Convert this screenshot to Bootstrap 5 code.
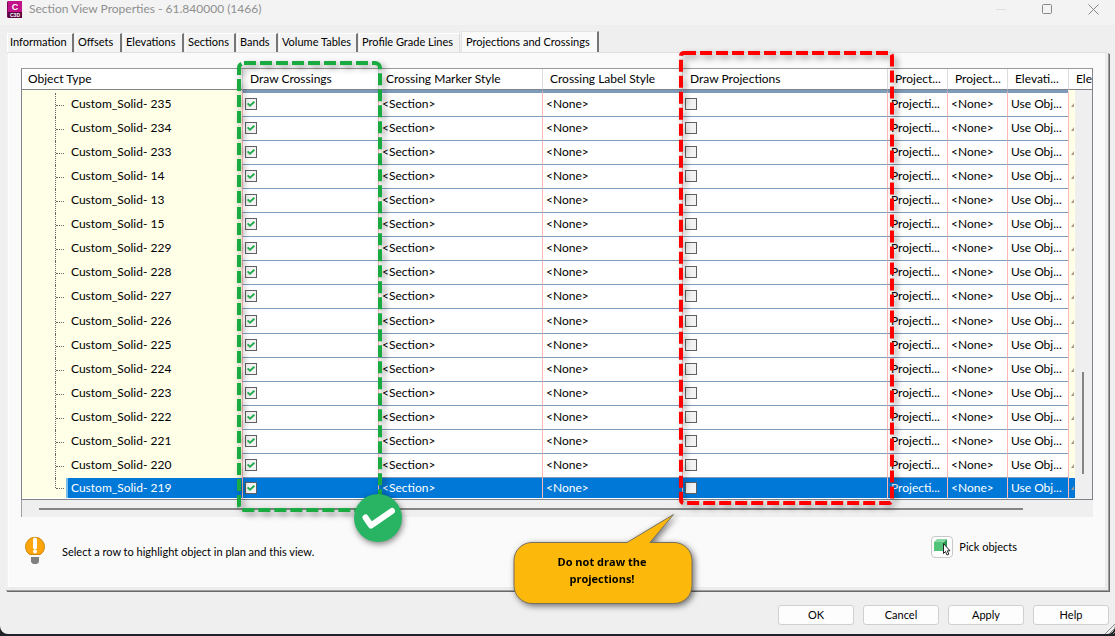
<!DOCTYPE html>
<html lang="en">
<head>
<meta charset="utf-8">
<meta name="viewport" content="width=device-width, initial-scale=1">
<title>Section View Properties</title>
<link rel="stylesheet" href="https://cdn.jsdelivr.net/npm/bootstrap@5.3.0/dist/css/bootstrap.min.css">
<style>
body { background: #1f2328; font-family: Lato, "Open Sans", sans-serif; font-size: 12px; line-height: 16px; color: #000; }
.dialog { min-height: calc(100vh - 2px); background: #efefef; border-radius: 0 0 8px 8px; position: relative; }
.titlebar { height: 25px; background: #f3f3f3; color: #8f8f8f; padding: 0 7px 7px; gap: 6px; }
.caption-btn { border: 0; background: none; padding: 0; width: 46px; height: 18px; display: flex; align-items: center; justify-content: center; }
.caption-group { margin-right: -8px; }

/* tab strip */
.tabstrip { padding: 7px 6px 0; height: 27px; }
.tabstrip .nav-link { font-size: 11px; line-height: 14px; color: #000; border: 0; border-top: 1px solid #fff; border-left: 1px solid #fff; border-right: 2px solid #767676; border-radius: 0; height: 19px; padding: 1px 0 0 2px; margin: 0 0 0 1px; background: #f3f3f3; white-space: nowrap; }
.tabstrip .nav-link.active { height: 21px; background: #fafafa; padding: 3px 0 0 4px; border-color: #e4e4e4 #767676 transparent #e4e4e4; border-bottom: 0; }
.nav-link:nth-child(1) { width: 67px; }
.nav-link:nth-child(2) { width: 47px; }
.nav-link:nth-child(3) { width: 61px; }
.nav-link:nth-child(4) { width: 51px; }
.nav-link:nth-child(5) { width: 41px; }
.nav-link:nth-child(6) { width: 79px; }
.nav-link:nth-child(7) { width: 101px; }
.nav-link:nth-child(8) { width: 138px; }
.tabstrip .nav-link:nth-child(7) { border-right: 1px solid #dcdcdc; }

.pane { margin: 0 7px 0 5px; background: #fafafa; border: 3px solid #ececec; border-top: 1px solid #e0e0e0; border-left-color: #f1f1f1; box-shadow: 1px 1px 0 #a0a0a0, 2px 2px 0 #686868, inset 1px 0 0 #fff; padding: 15px 12px 20px 13px; min-height: 537px; }

/* object grid */
.grid-frame { border: 1px solid #82828a; border-top-color: #9a9a9a; background: #fff; }
.objgrid { width: 100%; table-layout: fixed; border-collapse: separate; border-spacing: 0; }
.c-tree { width: 220px; }
.c-draw { width: 136px; }
.c-marker { width: 164px; }
.c-label { width: 140px; }
.c-short { width: 60px; }
.c-elev { width: 61px; }
.c-edge { width: 7px; }
.c-rail { width: 17px; }
.objgrid th { height: 21px; padding: 0 0 0 6px; font-weight: 400; text-align: left; white-space: nowrap; border-bottom: 1px solid #82828a; position: relative; }
.objgrid th + th { border-left: 1px solid #dcdcdc; padding-left: 7px; }
.objgrid td { height: 24px; padding: 0 0 1px 3px; vertical-align: middle; border-bottom: 1px solid #7d9cbb; border-left: 1px solid #ffb6b6; white-space: nowrap; }
.objgrid td.check { padding-left: 2px; }
.objgrid tr.first td { border-top: 3px solid #7d9cbb; height: 27px; }
.objgrid tr.first td.tree, .objgrid tr.first td.edge { border-top-color: #ffffe8; }
.objgrid tr.first td.rail { border-top: 0; }
.objgrid tr:nth-child(10) td { height: 25px; }
.objgrid td.tree { background: #ffffe8; border-left: 0; border-bottom: 0; padding: 0 0 2px 49px; position: relative; }
.objgrid td.tree::before { content: ""; position: absolute; left: 33px; top: 0; bottom: 0; border-left: 1px dotted #666; }
.objgrid td.tree::after { content: ""; position: absolute; left: 34px; top: 50%; width: 8px; border-top: 1px dotted #666; }
.objgrid td.edge { background: #ffffe8; border-bottom: 0; padding: 0 0 0 2px; overflow: hidden; }
.edge svg { display: block; }
.objgrid td.rail { background: #efefef; border: 0; padding: 0; position: relative; }
.objgrid tr.picked td { background: #0078d7; color: #fff; height: 21px; padding-bottom: 0; border-bottom: 1px solid #fff; }
.objgrid tr.picked td.tree { background: linear-gradient(90deg, #ffffe8 44px, #7dbbe8 44px, #7dbbe8 46px, #0078d7 46px); }
.objgrid tr.picked td.tree::before { bottom: 50%; }
.rail-thumb { position: absolute; right: 8px; top: 69%; height: 25%; width: 2px; background: #858585; }
.clip-text { overflow: hidden; }
.tick { appearance: none; display: block; width: 12px; height: 12px; margin: 0; background: #f3f3f3 center/10px no-repeat; border: 1px solid #606060; border-radius: 0; }
.tick:checked { background-image: url("data:image/svg+xml,%3Csvg xmlns='http://www.w3.org/2000/svg' viewBox='0 0 10 10'%3E%3Cpath d='M1.6 4.3 4 6.8 8.4 2.8' fill='none' stroke='%2322ac4c' stroke-width='1.9'/%3E%3C/svg%3E"); }
.hrail { height: 17px; background: #efefef; border-left: 1px solid #a0a0a0; padding: 8px 70px 0 17px; }
.hrail-thumb { height: 2px; background: #858585; }

/* annotations drawn over the grid columns */
.marquee { position: absolute; z-index: 3; overflow: visible; pointer-events: none; filter: drop-shadow(3px 3px 3px rgba(0,0,0,.4)); }
.marquee rect { fill: none; stroke-width: 4px; stroke-dasharray: 12px 4px; }
.marquee-ok { left: -4px; top: -6px; width: 141px; height: 447px; }
.marquee-no { left: -2px; top: -16px; width: calc(100% + 7px); height: 450px; }
.okbadge { position: absolute; z-index: 4; left: 111px; top: 425px; width: 48px; height: 48px; filter: drop-shadow(1px 2px 3px rgba(0,0,0,.5)); }
.callout { position: absolute; z-index: 4; left: -170px; top: 443px; width: 181px; height: 92px; filter: drop-shadow(2px 2px 3px rgba(0,0,0,.55)); }
.callout-text { position: absolute; left: 0; right: 3px; top: 41px; text-align: center; font: 700 11px/17px "Open Sans", sans-serif; }

.infobar { padding-top: 19px; gap: 17px; }
.hint { font-size: 11px; }
.pick { margin-right: 76px; gap: 6px; }
.pickbtn { width: 22px; height: 22px; border: 1px solid #c8c8c8; border-radius: 4px; background: #fdfdfd; padding: 0; display: flex; }
.dlg-btn { width: 76px; height: 20px; font-size: 11px; line-height: 16px; padding: 0; background: #fdfdfd; border: 1px solid #d0d0d0; border-radius: 3px; color: #000; }
.footer-bar { padding: 15px 6px 9px; gap: 9px; }
.grip { position: absolute; right: 0; bottom: 0; }
</style>
</head>
<body>
<main class="dialog">
  <header class="titlebar d-flex align-items-center">
    <svg width="16" height="17" viewBox="0 0 16 17" aria-hidden="true"><rect x="1" width="14" height="12" fill="#c1128a"/><path d="M1 0v17l-1-1V1z" fill="#7a0a55"/><rect x="1" y="11" width="14" height="6" fill="#5a0640"/><text x="8" y="9" text-anchor="middle" font-family="Liberation Sans" font-weight="700" font-size="9" fill="#fff">C</text><text x="8" y="16" text-anchor="middle" font-family="Liberation Sans" font-weight="700" font-size="5" fill="#fff">C3D</text></svg>
    <span class="me-auto">Section View Properties - 61.840000 (1466)</span>
    <div class="caption-group d-flex">
      <button class="caption-btn" aria-label="Minimize"><svg width="10" height="10"><path d="M0 5.500h10" stroke="#ddd"/></svg></button>
      <button class="caption-btn" aria-label="Maximize"><svg width="10" height="10"><rect x=".5" y=".5" width="9" height="9" rx="1" fill="none" stroke="#888"/></svg></button>
      <button class="caption-btn" aria-label="Close"><svg width="11" height="11"><path d="M.5.5l10 10M10.500.5l-10 10" stroke="#888"/></svg></button>
    </div>
  </header>

  <nav class="tabstrip nav align-items-end flex-nowrap">
    <a class="nav-link" href="#">Information</a>
    <a class="nav-link" href="#">Offsets</a>
    <a class="nav-link" href="#">Elevations</a>
    <a class="nav-link" href="#">Sections</a>
    <a class="nav-link" href="#">Bands</a>
    <a class="nav-link" href="#">Volume Tables</a>
    <a class="nav-link" href="#">Profile Grade Lines</a>
    <a class="nav-link active" href="#">Projections and Crossings</a>
  </nav>

  <section class="pane">
    <div class="grid-frame">
      <table class="objgrid">
        <colgroup><col class="c-tree"><col class="c-draw"><col class="c-marker"><col class="c-label"><col><col class="c-short"><col class="c-short"><col class="c-elev"><col class="c-edge"><col class="c-rail"></colgroup>
        <thead>
          <tr>
            <th>Object Type</th>
            <th>Draw Crossings
              <svg class="marquee marquee-ok" aria-hidden="true"><rect width="100%" height="100%" rx="5" stroke="#1aab40"/></svg>
              <svg class="okbadge" viewBox="0 0 48 48" aria-hidden="true"><circle cx="24" cy="24" r="24" fill="#28b463"/><path d="M11.500 23.500 17 31.500 38 17" fill="none" stroke="#fff" stroke-width="6" stroke-linecap="round" stroke-linejoin="round"/></svg>
            </th>
            <th>Crossing Marker Style</th>
            <th>Crossing Label Style</th>
            <th>Draw Projections
              <svg class="marquee marquee-no" aria-hidden="true"><rect width="100%" height="100%" rx="3" stroke="#f00"/></svg>
              <div class="callout">
                <svg width="181" height="92" aria-hidden="true"><path d="M19 30.500H114L160.500 2.500 137 30.500H161a18 18 0 0 1 18 18V73.500a18 18 0 0 1-18 18H19a18 18 0 0 1-18-18V48.500a18 18 0 0 1 18-18z" fill="#fdb90b" stroke="#77705f"/></svg>
                <div class="callout-text">Do not draw the<br>projections!</div>
              </div>
            </th>
            <th>Project...</th>
            <th>Project...</th>
            <th>Elevati...</th>
            <th colspan="2"><div class="clip-text">Elev</div></th>
          </tr>
        </thead>
        <tbody id="rows"></tbody>
      </table>
    </div>
    <div class="hrail"><div class="hrail-thumb"></div></div>

    <div class="infobar d-flex align-items-center">
      <svg class="ms-1" width="20" height="31" viewBox="1 0 20 31" aria-hidden="true"><path d="M5.500 18.500A9.500 9.500 0 1 1 16.500 18.500z" fill="#fda50b" stroke="#cf8608"/><path d="M11 3.500v8" stroke="#fff" stroke-width="4" stroke-linecap="round"/><circle cx="11" cy="15.500" r="2" fill="#fff"/><path d="M7 21h8v5l-2 2H9l-2-2z" fill="#808080"/></svg>
      <span class="hint me-auto">Select a row to highlight object in plan and this view.</span>
      <div class="pick d-flex align-items-center align-self-start">
        <button class="pickbtn" id="pick" aria-label="Pick objects"><svg width="20" height="20" viewBox="0 0 20 20"><path d="M2 5 5 2H15L12 5z" fill="#85d8a0"/><path d="M12 5 15 2V11L12 14z" fill="#2c9c52"/><path d="M2 5H12V14H2z" fill="#52c47a"/><path d="M11.500 6.500V16.500L13.500 14.500 15 18 16.800 17.200 15.300 13.800H18z" fill="#fff" stroke="#222"/></svg></button>
        <label class="hint" for="pick">Pick objects</label>
      </div>
    </div>
  </section>

  <footer class="footer-bar d-flex justify-content-end">
    <button class="dlg-btn">OK</button>
    <button class="dlg-btn">Cancel</button>
    <button class="dlg-btn">Apply</button>
    <button class="dlg-btn">Help</button>
  </footer>
  <svg class="grip" width="10" height="10" aria-hidden="true"><path d="M0 10 10 0M4 10 10 4M8 10l2-2" stroke="#888" fill="none"/></svg>
</main>
<script src="https://cdn.jsdelivr.net/npm/bootstrap@5.3.0/dist/js/bootstrap.bundle.min.js"></script>
<script>
const ids = [235, 234, 233, 14, 13, 15, 229, 228, 227, 226, 225, 224, 223, 222, 221, 220, 219];
document.getElementById('rows').innerHTML = ids.map((id, i) => {
  const cls = i === 0 ? 'first' : i === ids.length - 1 ? 'picked' : '';
  return `<tr class="${cls}">
    <td class="tree">Custom_Solid- ${id}</td>
    <td class="check"><input type="checkbox" class="tick" checked aria-label="Draw crossings ${id}"></td>
    <td>&lt;Section&gt;</td>
    <td>&lt;None&gt;</td>
    <td class="check"><input type="checkbox" class="tick" aria-label="Draw projections ${id}"></td>
    <td>Projecti...</td>
    <td>&lt;None&gt;</td>
    <td>Use Obj...</td>
    <td class="edge"><svg width="3" height="6"><path d="M0 5 3 1V5z" fill="#a8998c"/></svg></td>
    ${i === 0 ? `<td class="rail" rowspan="${ids.length}"><div class="rail-thumb"></div></td>` : ''}
  </tr>`;
}).join('');
</script>
</body>
</html>
